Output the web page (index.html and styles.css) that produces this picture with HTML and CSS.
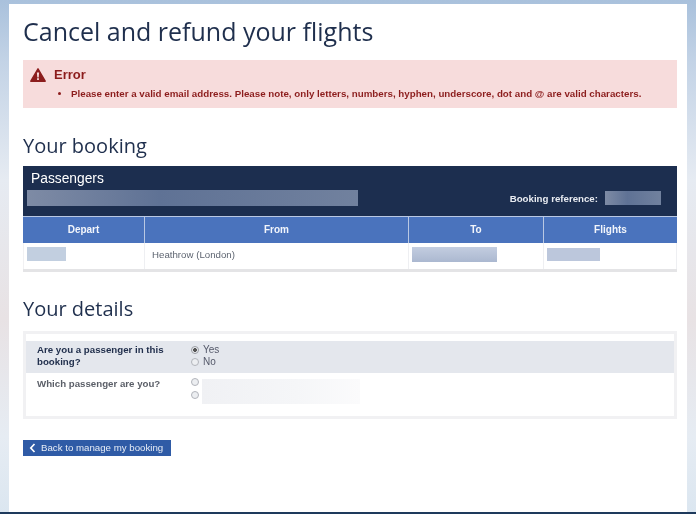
FILE: index.html
```html
<!DOCTYPE html>
<html lang="en">
<head>
<meta charset="utf-8">
<title>Cancel and refund your flights</title>
<link rel="stylesheet" href="styles.css">
</head>
<body>
<div class="topstrip"></div>
<main class="page">
  <h1 class="title">Cancel and refund your flights</h1>
  <section class="error">
    <div class="error-head">
      <svg class="error-icon" viewBox="0 0 16 14" aria-hidden="true"><path d="M8 0.8 L15.2 13.2 H0.8 Z" fill="#8c1d1d" stroke="#8c1d1d" stroke-width="1.4" stroke-linejoin="round"/><path d="M6.9 4.4 H9.1 L8.7 9.4 H7.3 Z" fill="#f7dcdc"/><rect x="7.1" y="10.2" width="1.8" height="1.8" fill="#f7dcdc"/></svg>
      <span>Error</span>
    </div>
    <ul class="error-list"><li>Please enter a valid email address. Please note, only letters, numbers, hyphen, underscore, dot and @ are valid characters.</li></ul>
  </section>

  <h2 class="section-title booking-title">Your booking</h2>
  <section class="booking">
    <div class="pax">
      <div class="pax-name">Passengers</div>
      <div class="pax-row">
        <div class="mask mask-name"></div>
        <div class="ref"><b>Booking reference:</b><div class="mask mask-ref"></div></div>
      </div>
    </div>
    <div class="grid head">
      <div class="cell">Depart</div><div class="cell">From</div><div class="cell">To</div><div class="cell">Flights</div>
    </div>
    <div class="grid body">
      <div class="cell"><div class="mask mask-date"></div></div>
      <div class="cell from">Heathrow (London)</div>
      <div class="cell"><div class="mask mask-to"></div></div>
      <div class="cell"><div class="mask mask-flight"></div></div>
    </div>
  </section>

  <h2 class="section-title details-title">Your details</h2>
  <section class="details">
    <div class="row row-on">
      <div class="q q-dark">Are you a passenger in this booking?</div>
      <div class="opts">
        <div class="opt"><span class="radio radio-on"></span>Yes</div>
        <div class="opt"><span class="radio"></span>No</div>
      </div>
    </div>
    <div class="row row-off">
      <div class="q">Which passenger are you?</div>
      <div class="opts-wrap">
        <div class="radios"><span class="radio"></span><span class="radio"></span></div>
        <div class="mask-pale"></div>
      </div>
    </div>
  </section>

  <a class="back" href="#"><svg class="chev" viewBox="0 0 7 10" aria-hidden="true"><path d="M5.5 1 L1.8 5 L5.5 9" fill="none" stroke="#fff" stroke-width="1.7"/></svg>Back to manage my booking</a>
</main>
<div class="bottomstrip"></div>
</body>
</html>
```
FILE: styles.css
```css
* { box-sizing: border-box; }
html, body { margin: 0; height: 514px; overflow: hidden; }
body {
  width: 696px;
  display: flex;
  flex-direction: column;
  background: linear-gradient(180deg, #a9c1dc 0, #c3d3e6 12%, #e6ebf2 35%, #e8e2e4 62%, #e6ecf3 85%, #dbe6f0 100%);
  font-family: "Liberation Sans", Arial, sans-serif;
}
.topstrip { height: 4px; flex: none; }
.bottomstrip { height: 2px; flex: none; background: #1e3a5c; }
.page {
  flex: 1;
  margin: 0 9px 0 9px;
  padding: 0 10px 0 14px;
  background: #fff;
  display: flex;
  flex-direction: column;
  filter: blur(0.35px);
}
.title {
  margin: 0;
  padding-top: 10px;
  height: 56px;
  font: 400 25px/34px "Open Sans", sans-serif;
  color: #1f2f4d;
}
.error {
  height: 48px;
  background: #f7dcdc;
  color: #8c1d1d;
  padding: 7px 0 0 7px;
}
.error-head { display: flex; align-items: center; gap: 8px; font-size: 13px; font-weight: 700; line-height: 16px; }
.error-icon { width: 16px; height: 14px; display: block; }
.error-list { margin: 4px 0 0; padding: 0 0 0 41px; font-size: 9.75px; font-weight: 700; line-height: 13px; white-space: nowrap; }
.section-title { margin: 0; font: 400 20px/28px "Open Sans", sans-serif; color: #1f2f4d; }
.booking-title { padding-top: 24px; height: 58px; }
.booking { display: flex; flex-direction: column; }
.pax { height: 50px; background: #1c2e4f; color: #fff; padding: 4px 0 0 8px; }
.pax-name { font-size: 13.8px; line-height: 17px; }
.pax-row { display: flex; align-items: center; justify-content: space-between; margin: 3px 16px 0 -4px; }
.mask { background: linear-gradient(90deg, #7e8ba5, #5f7295 40%, #71819e); }
.mask-name { width: 331px; height: 16px; }
.ref { display: flex; align-items: center; gap: 7px; font-size: 9.7px; color: #e8ebf1; }
.mask-ref { width: 56px; height: 14px; }
.grid { display: grid; grid-template-columns: 121px 264px 135px 134px; }
.head { height: 27px; background: #4a73bd; border-top: 1px solid #b9c8e3; color: #f2f5fb; font-size: 10px; font-weight: 700; text-align: center; }
.head .cell { line-height: 26px; border-left: 1px solid #b9c8e3; }
.head .cell:first-child { border-left: 0; }
.body { height: 29px; border-bottom: 3px solid #e4e4e6; }
.body .cell { border-left: 1px solid #eeeff2; padding: 4px 0 0 3px; }
.body .cell:first-child { border-left: 1px solid #f1f1f3; padding-left: 3px; }
.body .cell:last-child { border-right: 1px solid #eeeff2; }
.body .from { font-size: 9.7px; line-height: 14px; color: #5d6470; padding: 5px 0 0 7px; }
.mask-date { width: 39px; height: 14px; background: #c2cfe0; }
.mask-to { width: 85px; height: 15px; background: linear-gradient(180deg, #c3cde0, #abb8d0); }
.mask-flight { width: 53px; height: 13px; margin-top: 1px; background: #bcc7dc; }
.details-title { padding-top: 23px; height: 59px; }
.details {
  height: 88px;
  border: 3px solid #f1f1f3;
  padding-top: 7px;
  display: flex;
  flex-direction: column;
}
.row { display: grid; grid-template-columns: 154px 1fr; padding-left: 11px; font-size: 9.7px; }
.row-on { height: 32px; background: #e4e7ed; align-items: start; padding-top: 3px; }
.q { font-weight: 700; line-height: 11.5px; color: #5b5f68; width: 135px; }
.q-dark { color: #22304d; }
.row-off { padding-top: 5px; }
.opts { line-height: 12px; color: #55596a; }
.opt { display: flex; align-items: center; gap: 4px; font-size: 10px; }
.radio {
  display: block;
  width: 8px;
  height: 8px;
  border-radius: 50%;
  background: #eceef1;
  border: 1px solid #b2b5bb;
}
.radio-on { background: radial-gradient(circle, #555 0 1.7px, #eceef1 2.2px); border-color: #9a9da4; }
.opts-wrap { display: flex; gap: 3px; }
.radios { display: flex; flex-direction: column; gap: 5px; }
.mask-pale { width: 158px; height: 25px; margin-top: 1px; background: linear-gradient(90deg, #f0f1f4, #f5f6f8 60%, #fbfbfc); }
.back {
  margin-top: 21px;
  width: 148px;
  height: 16px;
  display: flex;
  align-items: center;
  gap: 5px;
  padding-left: 6px;
  background: #2f5ba6;
  color: #e6ecf6;
  font-size: 9.7px;
  line-height: 16px;
  text-decoration: none;
}
.chev { width: 7px; height: 10px; flex: none; }
```
